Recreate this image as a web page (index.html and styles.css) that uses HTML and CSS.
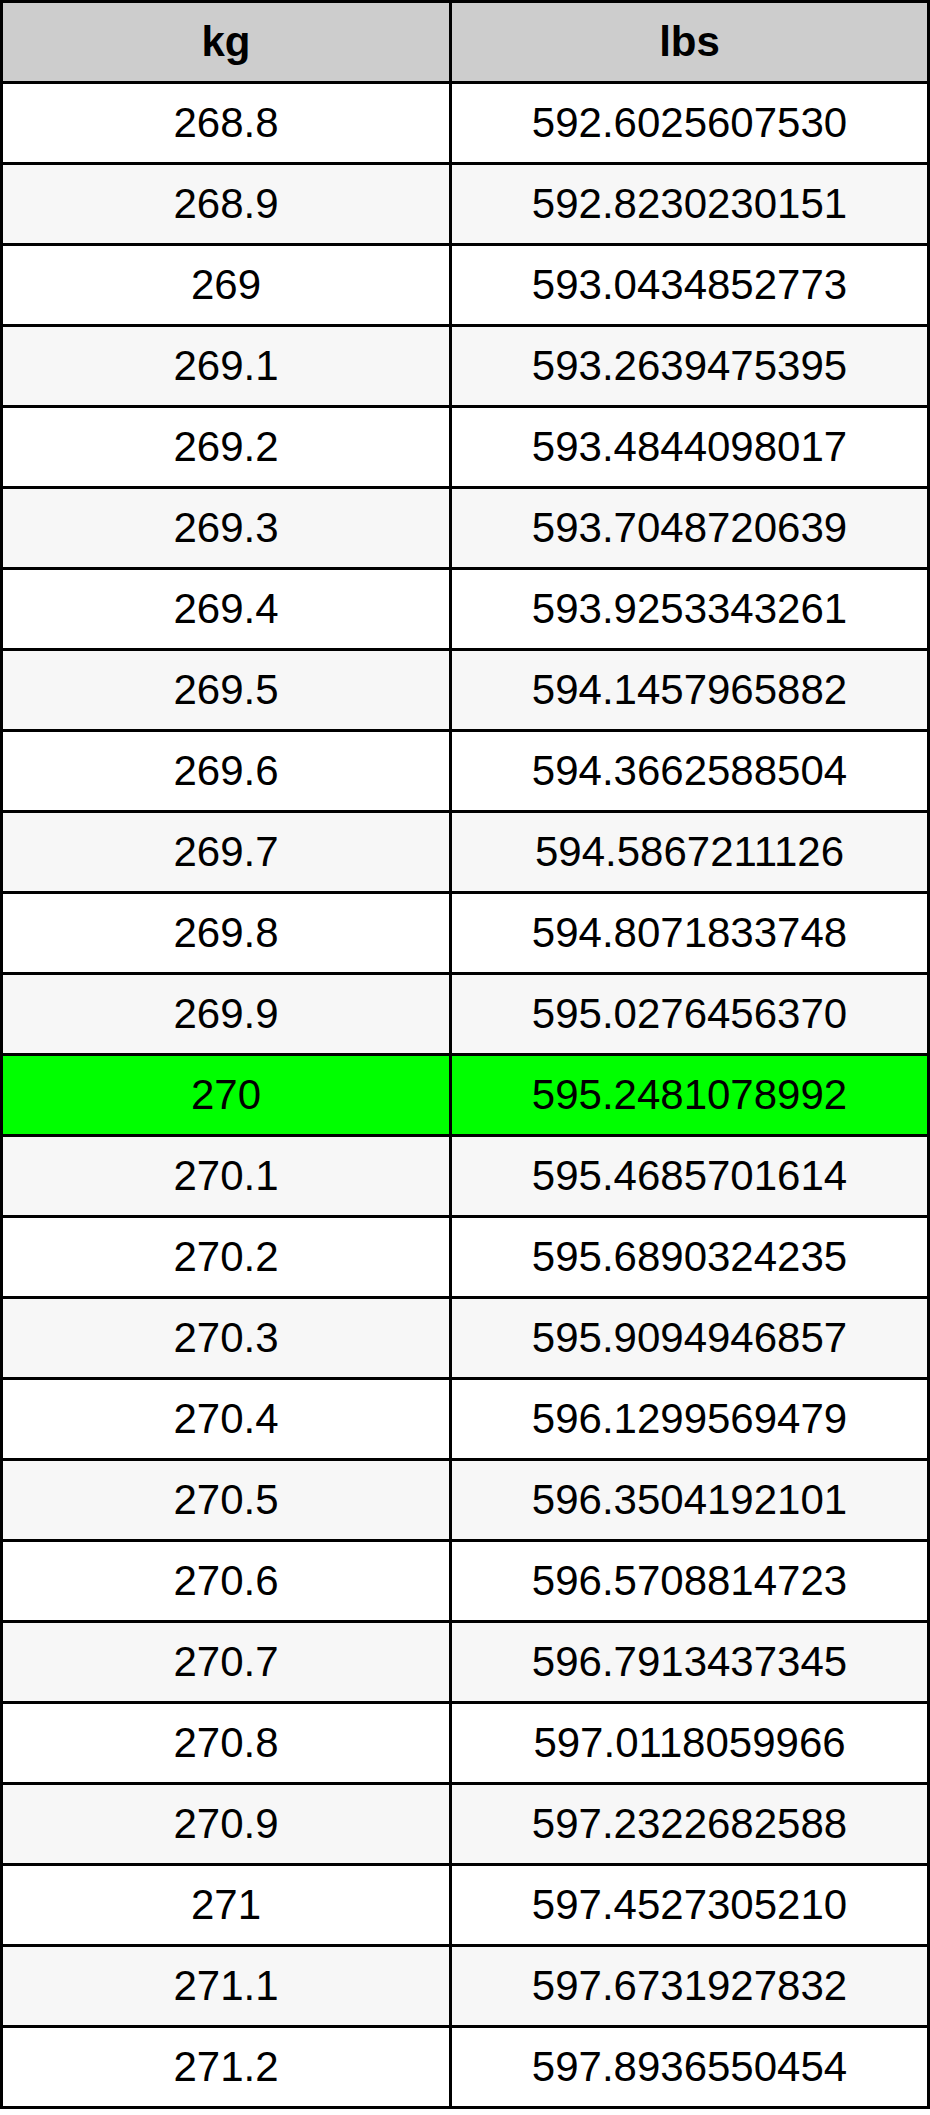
FILE: index.html
```html
<!DOCTYPE html>
<html>
<head>
<meta charset="utf-8">
<link rel="stylesheet" href="styles.css">
</head>
<body>
<div class="conv">
  <div class="row head"><div class="cell">kg</div><div class="cell">lbs</div></div>
  <div class="row"><div class="cell">268.8</div><div class="cell">592.6025607530</div></div>
  <div class="row alt"><div class="cell">268.9</div><div class="cell">592.8230230151</div></div>
  <div class="row"><div class="cell">269</div><div class="cell">593.0434852773</div></div>
  <div class="row alt"><div class="cell">269.1</div><div class="cell">593.2639475395</div></div>
  <div class="row"><div class="cell">269.2</div><div class="cell">593.4844098017</div></div>
  <div class="row alt"><div class="cell">269.3</div><div class="cell">593.7048720639</div></div>
  <div class="row"><div class="cell">269.4</div><div class="cell">593.9253343261</div></div>
  <div class="row alt"><div class="cell">269.5</div><div class="cell">594.1457965882</div></div>
  <div class="row"><div class="cell">269.6</div><div class="cell">594.3662588504</div></div>
  <div class="row alt"><div class="cell">269.7</div><div class="cell">594.5867211126</div></div>
  <div class="row"><div class="cell">269.8</div><div class="cell">594.8071833748</div></div>
  <div class="row alt"><div class="cell">269.9</div><div class="cell">595.0276456370</div></div>
  <div class="row hit"><div class="cell">270</div><div class="cell">595.2481078992</div></div>
  <div class="row alt"><div class="cell">270.1</div><div class="cell">595.4685701614</div></div>
  <div class="row"><div class="cell">270.2</div><div class="cell">595.6890324235</div></div>
  <div class="row alt"><div class="cell">270.3</div><div class="cell">595.9094946857</div></div>
  <div class="row"><div class="cell">270.4</div><div class="cell">596.1299569479</div></div>
  <div class="row alt"><div class="cell">270.5</div><div class="cell">596.3504192101</div></div>
  <div class="row"><div class="cell">270.6</div><div class="cell">596.5708814723</div></div>
  <div class="row alt"><div class="cell">270.7</div><div class="cell">596.7913437345</div></div>
  <div class="row"><div class="cell">270.8</div><div class="cell">597.0118059966</div></div>
  <div class="row alt"><div class="cell">270.9</div><div class="cell">597.2322682588</div></div>
  <div class="row"><div class="cell">271</div><div class="cell">597.4527305210</div></div>
  <div class="row alt"><div class="cell">271.1</div><div class="cell">597.6731927832</div></div>
  <div class="row"><div class="cell">271.2</div><div class="cell">597.8936550454</div></div>
</div>
</body>
</html>
```

FILE: styles.css
```css
html, body {
  margin: 0;
  padding: 0;
  background: #ffffff;
}

.conv {
  width: 930px;
  box-sizing: border-box;
  display: flex;
  flex-direction: column;
  gap: 3px;
  padding: 3px;
  background: #000000;
  font-family: "Liberation Sans", Arial, sans-serif;
  font-size: 42px;
  color: #000000;
}

.row {
  display: grid;
  grid-template-columns: 446px 475px;
  column-gap: 3px;
  height: 78px;
}

.cell {
  display: flex;
  align-items: center;
  justify-content: center;
  background: #ffffff;
  line-height: 1;
}

.row.alt .cell {
  background: #f7f7f7;
}

.row.head .cell {
  background: #cdcdcd;
  font-weight: bold;
}

.row.hit .cell {
  background: #00ff00;
}
```
